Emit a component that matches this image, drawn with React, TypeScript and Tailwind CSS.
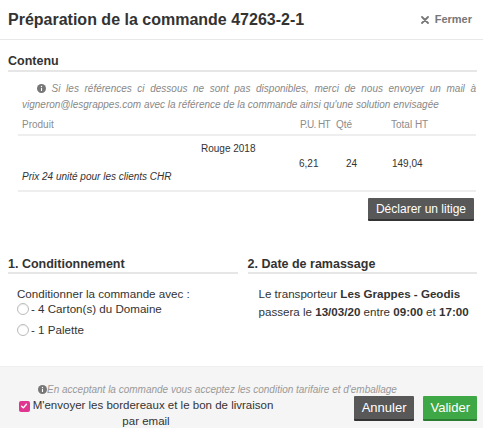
import React from "react";

const font = { fontFamily: '"Liberation Sans", Arial, Helvetica, sans-serif' };

function InfoIcon({ size = 9 }: { size?: number }) {
  return (
    <svg width={size} height={size} viewBox="0 0 16 16" className="inline-block align-[-1px]">
      <circle cx="8" cy="8" r="8" fill="#777" />
      <rect x="7" y="6.5" width="2" height="6" rx="0.5" fill="#fff" />
      <circle cx="8" cy="4.3" r="1.2" fill="#fff" />
    </svg>
  );
}

function Radio() {
  return (
    <span className="inline-block w-[12px] h-[12px] rounded-full border border-[#bbb] bg-white shadow-[inset_0_1px_1px_rgba(0,0,0,0.08)] mr-[2px] align-[-2px]" />
  );
}

export default function App() {
  return (
    <div className="w-[483px] h-[428px] bg-white text-[#333] flex flex-col overflow-hidden" style={font}>
      {/* Header */}
      <div className="h-10 shrink-0 flex items-center justify-between pl-2 pr-[11px] border-b border-[#e8e8e8]">
        <h1 className="text-[16px] font-bold text-[#333]">Préparation de la commande 47263-2-1</h1>
        <button className="flex items-center gap-[6px] text-[11px] font-bold text-[#777]">
          <svg width="8" height="8" viewBox="0 0 8 8">
            <path d="M1 1 L7 7 M7 1 L1 7" stroke="#777" strokeWidth="1.8" strokeLinecap="round" />
          </svg>
          <span>Fermer</span>
        </button>
      </div>

      {/* Contenu */}
      <div className="pl-2 pr-[6px] pt-[13px]">
        <h2 className="text-[12.5px] font-bold leading-[16px] pb-[1px] border-b-2 border-[#e6e6e6]">Contenu</h2>
        <div className="pl-[14px] pr-[1px]">
          <p className="mt-[9px] text-[10px] leading-[16px] italic text-[#888] text-justify [text-indent:15px]">
            <InfoIcon /> Si les références ci dessous ne sont pas disponibles, merci de nous envoyer un mail à vigneron@lesgrappes.com avec la référence de la commande ainsi qu'une solution envisagée
          </p>
          <div className="mt-[4px] -ml-1">
            <div className="grid grid-cols-[278px_40px_54px_1fr] text-[10px] font-normal text-[#8c8c8c] leading-[16px] pb-[1px] border-b-2 border-[#eeeeee] whitespace-nowrap">
              <div className="pl-1">Produit</div>
              <div className="pl-1 tracking-[-0.6px]">P.U. HT</div>
              <div className="pl-[0px]">Qté</div>
              <div className="pl-[1px]">Total HT</div>
            </div>
            <div className="grid grid-cols-[278px_40px_54px_1fr] text-[10px] text-[#333] h-[56px] border-b-2 border-[#eeeeee]">
              <div className="flex flex-col justify-between py-[5px]">
                <div className="pl-[183px] leading-[16px]">Rouge 2018</div>
                <div className="pl-1 italic leading-[16px]">Prix 24 unité pour les clients CHR</div>
              </div>
              <div className="pl-[3px] flex items-center">6,21</div>
              <div className="pl-[10px] flex items-center">24</div>
              <div className="pl-[2px] flex items-center">149,04</div>
            </div>
            <div className="flex justify-end mt-[6px] pr-[2px]">
              <button className="h-[23px] px-2 bg-[#585858] text-white text-[12px] border-b-2 border-[#333] rounded-[1px]">Déclarer un litige</button>
            </div>
          </div>
        </div>
      </div>

      {/* Two columns */}
      <div className="grid grid-cols-2 gap-[10px] pl-2 pr-[6px] mt-[35px]">
        <div>
          <h2 className="text-[12.5px] font-bold leading-[16px] border-b-2 border-[#e6e6e6]">1. Conditionnement</h2>
          <div className="pl-[9px] mt-[11px] text-[11.6px] leading-[18px]">
            <div>Conditionner la commande avec :</div>
            <div className="mt-[-4px] leading-[20px]"><Radio />- 4 Carton(s) du Domaine</div>
            <div className="leading-[22px]"><Radio />- 1 Palette</div>
          </div>
        </div>
        <div>
          <h2 className="text-[12.5px] font-bold leading-[16px] border-b-2 border-[#e6e6e6]">2. Date de ramassage</h2>
          <div className="pl-[11px] mt-[11px] text-[11.6px] leading-[18px]">
            <div>Le transporteur <b>Les Grappes - Geodis</b></div>
            <div>passera le <b>13/03/20</b> entre <b>09:00</b> et <b>17:00</b></div>
          </div>
        </div>
      </div>

      {/* Footer */}
      <div className="mt-auto h-[62px] bg-[#f5f5f5] border-t border-[#eeeeee]">
        <div className="pl-[38px] pt-[16px] text-[10px] italic text-[#999] leading-[14px]">
          <InfoIcon size={9} />En acceptant la commande vous acceptez les condition tarifaire et d'emballage
        </div>
        <div className="flex items-start justify-between pl-[15px] pr-[6px]">
          <div className="w-[262px] text-center text-[11.5px] leading-[16px] text-[#333]">
            <span className="inline-flex items-center justify-center w-[11px] h-[11px] rounded-[2px] bg-[#e0368f] align-[-1px] mr-[3px]">
              <svg width="8" height="8" viewBox="0 0 10 10"><path d="M2 5.2 L4.2 7.3 L8 2.8" stroke="#fff" strokeWidth="1.8" fill="none" strokeLinecap="round" strokeLinejoin="round" /></svg>
            </span>
            M'envoyer les bordereaux et le bon de livraison par email
          </div>
          <div className="flex gap-[9px] mt-[-1px]">
            <button className="h-[25px] px-[8px] bg-[#585858] text-white text-[13px] border-b-2 border-[#333] rounded-[1px]">Annuler</button>
            <button className="h-[25px] px-[7px] bg-[#3fa846] text-white text-[13px] border-b-2 border-[#2a7d30] rounded-[1px]">Valider</button>
          </div>
        </div>
      </div>
    </div>
  );
}
